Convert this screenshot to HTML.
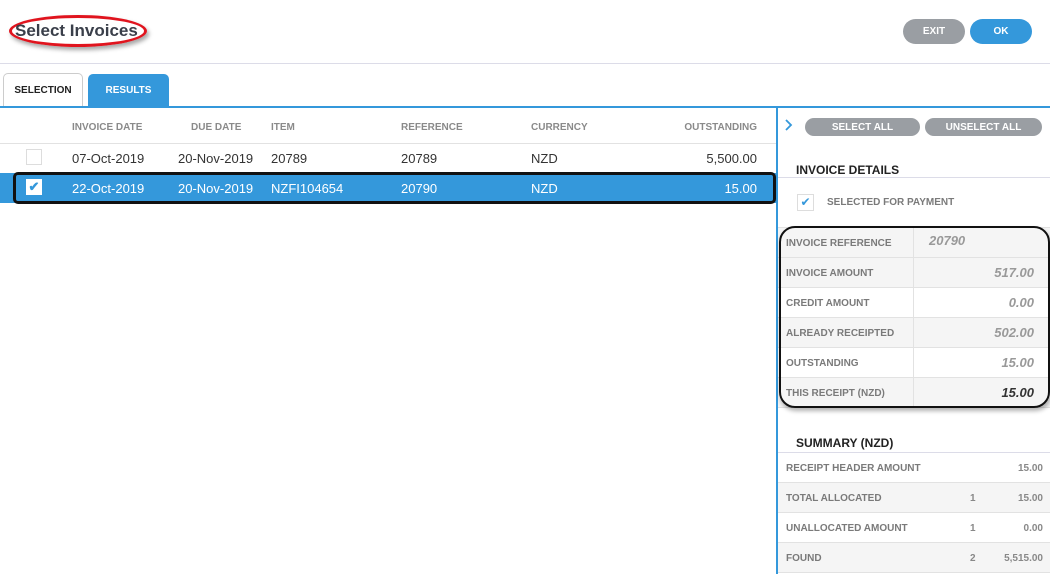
<!DOCTYPE html>
<html><head><style>
*{margin:0;padding:0;box-sizing:border-box}
body{width:1050px;height:574px;overflow:hidden;background:#fff;font-family:"Liberation Sans",sans-serif;position:relative;color:#333}
.a{position:absolute}
.h{font-size:10px;font-weight:bold;color:#8a8a8a}
.btn{position:absolute;border-radius:13px;color:#fff;font-size:10px;font-weight:bold;display:flex;align-items:center;justify-content:center}
.r{font-size:13px;color:#333}
.row{position:absolute;left:778px;width:272px;height:30px;border-bottom:1px solid #e2e2e2}
.lab{position:absolute;left:8px;top:10px;font-size:10px;font-weight:bold;color:#7a7a7a}
.val{position:absolute;right:16px;top:7px;font-size:13px;font-style:italic;font-weight:bold;color:#999}
.sv{position:absolute;right:7px;top:10px;font-size:10px;font-weight:bold;color:#888}
.sc{position:absolute;left:192px;top:10px;font-size:10px;font-weight:bold;color:#888}
</style></head><body>
<div class="a" style="left:9px;top:15px;width:138px;height:32px;border:3px solid #e0141e;border-radius:50%;box-shadow:2px 3px 4px rgba(0,0,0,.35)"></div>
<div class="a" style="left:15px;top:21px;font-size:17px;font-weight:bold;color:#3a3f4a">Select Invoices</div>
<div class="btn" style="left:903px;top:19px;width:62px;height:25px;background:#9a9ea3">EXIT</div>
<div class="btn" style="left:970px;top:19px;width:62px;height:25px;background:#3498db">OK</div>
<div class="a" style="left:0;top:63px;width:1050px;height:1px;background:#dcdce8"></div>
<div class="a" style="left:3px;top:73px;width:80px;height:34px;border:1px solid #ccc;border-bottom:none;border-radius:5px 5px 0 0;font-size:10px;font-weight:bold;color:#222;text-align:center;line-height:34px">SELECTION</div>
<div class="a" style="left:88px;top:74px;width:81px;height:33px;background:#3498db;border-radius:5px 5px 0 0;font-size:10px;font-weight:bold;color:#fff;text-align:center;line-height:33px">RESULTS</div>
<div class="a" style="left:0;top:106px;width:1050px;height:2px;background:#3498db"></div>
<div class="a" style="left:776px;top:106px;width:2px;height:468px;background:#3498db"></div>
<div class="a h" style="left:72px;top:122px">INVOICE DATE</div>
<div class="a h" style="left:191px;top:122px">DUE DATE</div>
<div class="a h" style="left:271px;top:122px">ITEM</div>
<div class="a h" style="left:401px;top:122px">REFERENCE</div>
<div class="a h" style="left:531px;top:122px">CURRENCY</div>
<div class="a h" style="right:293px;top:122px">OUTSTANDING</div>
<div class="a" style="left:0;top:143px;width:776px;height:1px;background:#e2e2e2"></div>
<div class="a" style="left:26px;top:149px;width:16px;height:16px;border:1px solid #ddd"></div>
<div class="a r" style="left:72px;top:151px">07-Oct-2019</div>
<div class="a r" style="left:178px;top:151px">20-Nov-2019</div>
<div class="a r" style="left:271px;top:151px">20789</div>
<div class="a r" style="left:401px;top:151px">20789</div>
<div class="a r" style="left:531px;top:151px">NZD</div>
<div class="a r" style="right:293px;top:151px">5,500.00</div>
<div class="a" style="left:0;top:173px;width:776px;height:30px;background:#3498db"></div>
<div class="a" style="left:13px;top:172px;width:763px;height:32px;border:3px solid #111;border-radius:5px"></div>
<div class="a" style="left:26px;top:179px;width:16px;height:16px;background:#fff;color:#3498db;font-size:13px;font-weight:bold;text-align:center;line-height:16px">✔</div>
<div class="a r" style="left:72px;top:181px;color:#fff">22-Oct-2019</div>
<div class="a r" style="left:178px;top:181px;color:#fff">20-Nov-2019</div>
<div class="a r" style="left:271px;top:181px;color:#fff">NZFI104654</div>
<div class="a r" style="left:401px;top:181px;color:#fff">20790</div>
<div class="a r" style="left:531px;top:181px;color:#fff">NZD</div>
<div class="a r" style="right:293px;top:181px;color:#fff">15.00</div>
<svg class="a" style="left:784px;top:118px" width="10" height="14"><path d="M2 2 L7 7 L2 12" stroke="#3498db" stroke-width="1.8" fill="none"/></svg>
<div class="btn" style="left:805px;top:118px;width:115px;height:18px;background:#9a9ea3">SELECT ALL</div>
<div class="btn" style="left:925px;top:118px;width:117px;height:18px;background:#9a9ea3">UNSELECT ALL</div>
<div class="a" style="left:796px;top:163px;font-size:12px;font-weight:bold;color:#222">INVOICE DETAILS</div>
<div class="a" style="left:778px;top:177px;width:272px;height:1px;background:#dcdce8"></div>
<div class="a" style="left:797px;top:194px;width:17px;height:17px;border:1px solid #ddd;color:#3498db;font-size:12px;text-align:center;line-height:15px">✔</div>
<div class="a" style="left:827px;top:197px;font-size:10px;font-weight:bold;color:#7a7a7a">SELECTED FOR PAYMENT</div>
<div class="a" style="left:778px;top:227px;width:272px;height:1px;background:#e2e2e2"></div>
<div class="row" style="top:228px;background:#f5f5f5"><div class="lab">INVOICE REFERENCE</div><div class="val" style="right:auto;left:151px;top:5px">20790</div></div>
<div class="row" style="top:258px;background:#f5f5f5"><div class="lab">INVOICE AMOUNT</div><div class="val">517.00</div></div>
<div class="row" style="top:288px;background:#fff"><div class="lab">CREDIT AMOUNT</div><div class="val">0.00</div></div>
<div class="row" style="top:318px;background:#f5f5f5"><div class="lab">ALREADY RECEIPTED</div><div class="val">502.00</div></div>
<div class="row" style="top:348px;background:#fff"><div class="lab">OUTSTANDING</div><div class="val">15.00</div></div>
<div class="row" style="top:378px;background:#f5f5f5"><div class="lab">THIS RECEIPT (NZD)</div><div class="val" style="color:#333">15.00</div></div>
<div class="a" style="left:913px;top:228px;width:1px;height:180px;background:#e2e2e2"></div>
<div class="a" style="left:779px;top:226px;width:271px;height:182px;border:2.5px solid #111;border-radius:16px;box-shadow:1px 3px 4px rgba(0,0,0,.3)"></div>
<div class="a" style="left:796px;top:436px;font-size:12px;font-weight:bold;color:#222">SUMMARY (NZD)</div>
<div class="a" style="left:778px;top:452px;width:272px;height:1px;background:#dcdce8"></div>
<div class="row" style="top:453px;background:#fff"><div class="lab">RECEIPT HEADER AMOUNT</div><div class="sv">15.00</div></div>
<div class="row" style="top:483px;background:#f5f5f5"><div class="lab">TOTAL ALLOCATED</div><div class="sc">1</div><div class="sv">15.00</div></div>
<div class="row" style="top:513px;background:#fff"><div class="lab">UNALLOCATED AMOUNT</div><div class="sc">1</div><div class="sv">0.00</div></div>
<div class="row" style="top:543px;background:#f5f5f5"><div class="lab">FOUND</div><div class="sc">2</div><div class="sv">5,515.00</div></div>
</body></html>
